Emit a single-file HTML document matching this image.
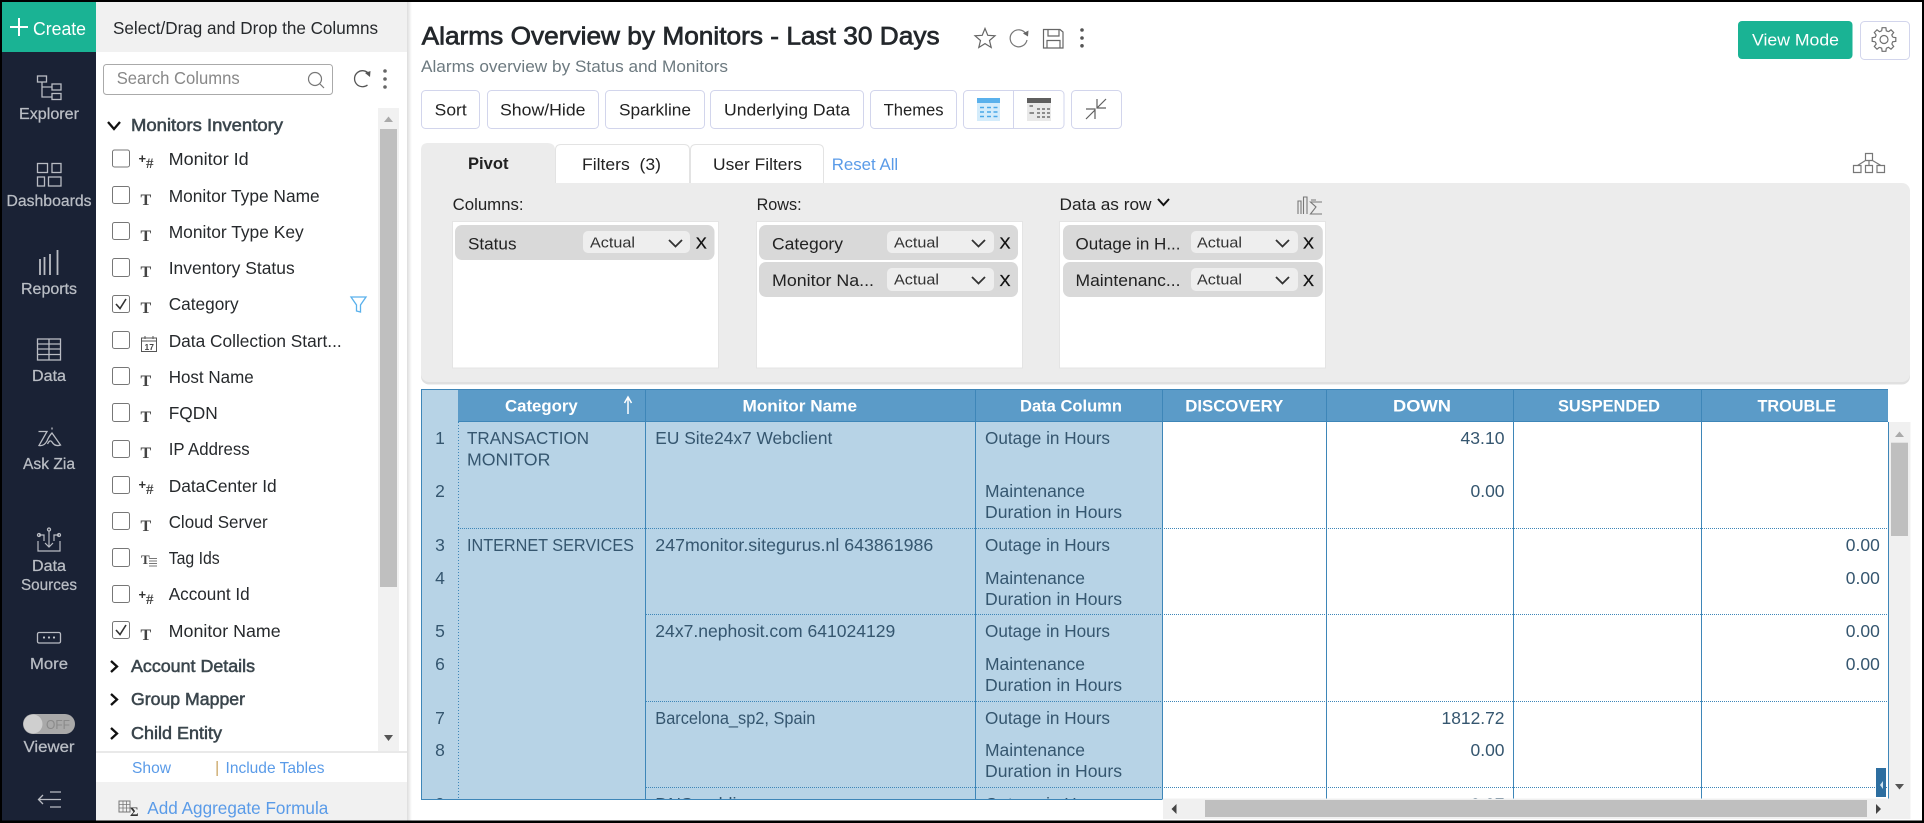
<!DOCTYPE html>
<html><head><meta charset="utf-8"><style>
html,body{margin:0;padding:0;width:1924px;height:823px;overflow:hidden;background:#fff}
svg{display:block;font-family:"Liberation Sans",sans-serif}
text{font-size:17.5px;fill:#26292c;white-space:pre}
.n text{font-size:15.5px;fill:#b9bdc4;stroke:#b9bdc4;stroke-width:.25}
.g{fill:#3b464d;stroke:#3b464d;stroke-width:.55}
.ty{font-family:"Liberation Serif",serif;font-weight:bold;font-size:16px;fill:#444}
.h{font-size:15px;fill:#444;font-family:"Liberation Serif",serif;font-weight:bold}
.p{font-size:13px;fill:#333;font-weight:bold}
.b{font-size:17px;fill:#222}
.a{font-size:15px;fill:#333}
.x{font-size:15.5px;fill:#111;stroke:#111;stroke-width:.3}
.th{fill:#fff;font-weight:bold;font-size:17px}
.c text{fill:#35566f}
.i{fill:none;stroke:#b9bcc3;stroke-width:1.3}
.k{fill:none;stroke:#777;stroke-width:1.2}
.chev{fill:none;stroke:#333;stroke-width:1.8}
</style></head><body>
<svg width="1924" height="823" viewBox="0 0 1924 823" xmlns="http://www.w3.org/2000/svg">
<defs>
<clipPath id="tc"><rect x="421" y="389" width="1468" height="410"/></clipPath>
<linearGradient id="sh" x1="0" x2="1" y1="0" y2="0"><stop offset="0" stop-color="#ddd"/><stop offset="1" stop-color="#fff"/></linearGradient>
</defs>
<rect width="1924" height="823" fill="#fff"/>

<!-- Left nav -->
<rect x="2" y="2" width="94" height="820" fill="#1a2235"/>
<rect x="2" y="2" width="94" height="50" fill="#1ab394"/>
<path d="M19 18V36M10 27H28" stroke="#fff" stroke-width="2" fill="none"/>
<text x="33" y="35" textLength="53" lengthAdjust="spacingAndGlyphs" style="font-size:18px;fill:#fff">Create</text>
<g class="n">
<text x="19" y="119" textLength="60" lengthAdjust="spacingAndGlyphs">Explorer</text>
<text x="6.5" y="206" textLength="85" lengthAdjust="spacingAndGlyphs">Dashboards</text>
<text x="21" y="294" textLength="56" lengthAdjust="spacingAndGlyphs">Reports</text>
<text x="32" y="381" textLength="34" lengthAdjust="spacingAndGlyphs">Data</text>
<text x="23" y="469" textLength="52" lengthAdjust="spacingAndGlyphs">Ask Zia</text>
<text x="32" y="571" textLength="34" lengthAdjust="spacingAndGlyphs">Data</text>
<text x="21" y="590" textLength="56" lengthAdjust="spacingAndGlyphs">Sources</text>
<text x="30" y="669" textLength="38" lengthAdjust="spacingAndGlyphs">More</text>
<text x="23.5" y="752" textLength="51" lengthAdjust="spacingAndGlyphs">Viewer</text>
</g>
<g class="i">
<rect x="37.5" y="76" width="9" height="6"/><rect x="52" y="84" width="9" height="6"/><rect x="52" y="93.5" width="9" height="6"/><path d="M42 82V97H52M42 87H52"/>
<rect x="37.5" y="163.5" width="10" height="9"/><rect x="52" y="163.5" width="9" height="9"/><rect x="37.5" y="177" width="7" height="9"/><rect x="48.5" y="177" width="12.5" height="9"/>
<path d="M40 259V275M44.5 257V275M50 254V275M57.5 250V275" stroke-width="1.8"/>
<rect x="37.5" y="339" width="23" height="21"/><path d="M37.5 344H60.5M37.5 349H60.5M37.5 354.500H60.500M49 339V360"/>
<path d="M38.500 431.500H47L39 445.500Q44 446.500 47 441Q49 436 52 433L60.500 445Q55 447 52 442Q50 439 47.500 444M52 427.500V429.500" stroke-width="1.3"/>
<path d="M38 541V551H60V541M49 531V547M45 543L49 547L53 543M39 535H44V541M59 535H54V541" stroke-width="1.2"/>
<circle cx="49" cy="529.500" r="1.500"/><circle cx="39" cy="535" r="1.500"/><circle cx="59" cy="535" r="1.500"/>
<rect x="37.500" y="632.500" width="23" height="10.500" rx="1.500"/>
<path d="M50 792H61M38.500 799.500H61M50 807H61M43 795L38.500 799.500L43 804"/>
</g>
<circle cx="44" cy="637.500" r="1.100" fill="#c5c8ce"/><circle cx="49" cy="637.500" r="1.100" fill="#c5c8ce"/><circle cx="54" cy="637.500" r="1.100" fill="#c5c8ce"/>
<rect x="23" y="714" width="52" height="20" rx="10" fill="#a9a9a9"/><circle cx="33" cy="724" r="9.500" fill="#cfcfcf"/>
<text x="46" y="729" textLength="24" lengthAdjust="spacingAndGlyphs" style="font-size:13px;fill:#8a8a8a">OFF</text>

<!-- Column panel -->
<rect x="96" y="2" width="311" height="50" fill="#f1f1f1"/>
<rect x="407" y="2" width="5" height="820" fill="url(#sh)"/>
<text x="113" y="34" textLength="265" lengthAdjust="spacingAndGlyphs" fill="#333">Select/Drag and Drop the Columns</text>
<rect x="103.500" y="64.500" width="229" height="30" rx="3" fill="#fff" stroke="#aaa"/>
<text x="116.700" y="84" textLength="123" lengthAdjust="spacingAndGlyphs" style="fill:#888">Search Columns</text>
<circle cx="315" cy="79" r="6.500" class="k"/><path d="M320 84L324 88" class="k"/>
<path d="M369 74A8 8 0 1 0 367.500 85" fill="none" stroke="#555" stroke-width="1.300"/><path d="M365 73L370 77L370.500 71Z" fill="#555"/>
<circle cx="385" cy="71" r="1.800" fill="#666"/><circle cx="385" cy="79" r="1.800" fill="#666"/><circle cx="385" cy="87" r="1.800" fill="#666"/>

<rect x="378" y="108" width="21" height="643" fill="#f1f1f1"/>
<rect x="380" y="129" width="17" height="458" fill="#bfbfbf"/>
<path d="M384 122L388.500 116.500L393 122Z" fill="#aaa"/><path d="M384 735L388.500 741L393 735Z" fill="#555"/>

<path d="M108 122L114 129L120 122" fill="none" stroke="#111" stroke-width="2.300"/>
<text x="131" y="131" textLength="152" lengthAdjust="spacingAndGlyphs" class="g">Monitors Inventory</text>
<text x="168.700" y="165" textLength="80" lengthAdjust="spacingAndGlyphs">Monitor Id</text>
<text x="168.700" y="202" textLength="151" lengthAdjust="spacingAndGlyphs">Monitor Type Name</text>
<text x="168.700" y="238" textLength="135" lengthAdjust="spacingAndGlyphs">Monitor Type Key</text>
<text x="168.700" y="274" textLength="126" lengthAdjust="spacingAndGlyphs">Inventory Status</text>
<text x="168.700" y="310" textLength="70" lengthAdjust="spacingAndGlyphs">Category</text>
<text x="168.700" y="347" textLength="173" lengthAdjust="spacingAndGlyphs">Data Collection Start...</text>
<text x="168.700" y="383" textLength="85" lengthAdjust="spacingAndGlyphs">Host Name</text>
<text x="168.700" y="419" textLength="49" lengthAdjust="spacingAndGlyphs">FQDN</text>
<text x="168.700" y="455" textLength="81" lengthAdjust="spacingAndGlyphs">IP Address</text>
<text x="168.700" y="492" textLength="108" lengthAdjust="spacingAndGlyphs">DataCenter Id</text>
<text x="168.700" y="528" textLength="99" lengthAdjust="spacingAndGlyphs">Cloud Server</text>
<text x="168.700" y="564" textLength="51" lengthAdjust="spacingAndGlyphs">Tag Ids</text>
<text x="168.700" y="600" textLength="81" lengthAdjust="spacingAndGlyphs">Account Id</text>
<text x="168.700" y="637" textLength="112" lengthAdjust="spacingAndGlyphs">Monitor Name</text>
<g fill="#fff" stroke="#777" stroke-width="1">
<rect x="112.500" y="150" width="17" height="17" rx="2"/><rect x="112.500" y="186.500" width="17" height="17" rx="2"/><rect x="112.500" y="222.500" width="17" height="17" rx="2"/><rect x="112.500" y="258.500" width="17" height="18" rx="2"/><rect x="112.500" y="295.500" width="17" height="17" rx="2"/><rect x="112.500" y="331.500" width="17" height="17" rx="2"/><rect x="112.500" y="367.500" width="17" height="17" rx="2"/><rect x="112.500" y="403.500" width="17" height="18" rx="2"/><rect x="112.500" y="440.500" width="17" height="17" rx="2"/><rect x="112.500" y="476.500" width="17" height="17" rx="2"/><rect x="112.500" y="512.500" width="17" height="17" rx="2"/><rect x="112.500" y="548.500" width="17" height="18" rx="2"/><rect x="112.500" y="585.500" width="17" height="17" rx="2"/><rect x="112.500" y="621.500" width="17" height="17" rx="2"/>
</g>
<path d="M116 304L120 308.500L126 299M116 630L120 634.500L126 625" fill="none" stroke="#333" stroke-width="1.600"/>
<g>
<text x="138.500" y="163" class="p">+</text><text x="146" y="168" class="h">#</text>
<text x="140.500" y="205" class="ty">T</text><text x="140.500" y="241" class="ty">T</text><text x="140.500" y="277" class="ty">T</text><text x="140.500" y="313" class="ty">T</text>
<text x="140.500" y="386" class="ty">T</text><text x="140.500" y="422" class="ty">T</text><text x="140.500" y="458" class="ty">T</text>
<text x="138.500" y="489" class="p">+</text><text x="146" y="494" class="h">#</text>
<text x="140.500" y="531" class="ty">T</text>
<text x="141" y="564" class="ty" style="font-size:13px">T</text><path d="M149 558.500H157M149 561H157M149 563.500H157M149 566H157" stroke="#777" stroke-width=".9"/>
<text x="138.500" y="599" class="p">+</text><text x="146" y="604" class="h">#</text>
<text x="140.500" y="640" class="ty">T</text>
</g>
<rect x="141.500" y="338" width="15" height="13.500" fill="none" stroke="#555"/><path d="M141.500 341H156.500M145 336V339M153 336V339" stroke="#555"/>
<text x="144.500" y="350" style="font-size:8.500px;font-weight:bold;fill:#444">17</text>
<path d="M351 297H366L360.500 305V312L356.500 311V305Z" fill="none" stroke="#5ab1ec" stroke-width="1.300"/>
<path d="M111 661L117 666.500L111 672M111 694L117 699.500L111 705M111 728L117 733.500L111 739" fill="none" stroke="#111" stroke-width="2.300"/>
<text x="131" y="672" textLength="124" lengthAdjust="spacingAndGlyphs" class="g">Account Details</text>
<text x="131" y="705" textLength="114" lengthAdjust="spacingAndGlyphs" class="g">Group Mapper</text>
<text x="131" y="739" textLength="91" lengthAdjust="spacingAndGlyphs" class="g">Child Entity</text>
<rect x="96" y="751" width="311" height="2" fill="#e9e9e9"/>
<text x="132" y="773" textLength="39" lengthAdjust="spacingAndGlyphs" style="font-size:16px;fill:#5a9be8">Show</text>
<rect x="216.500" y="761" width="1.300" height="15" fill="#c9a563"/>
<text x="225.500" y="773" textLength="99" lengthAdjust="spacingAndGlyphs" style="font-size:16px;fill:#5a9be8">Include Tables</text>
<rect x="96" y="782" width="311" height="40" fill="#f1f1f1"/>
<rect x="119" y="801" width="11" height="11" fill="none" stroke="#777"/><path d="M119 804.500H130M119 808H130M123 801V812M126.500 801V812" stroke="#777" stroke-width=".8"/>
<text x="130" y="816" style="font-size:13px;font-weight:bold;fill:#333;font-family:'Liberation Serif',serif">Σ</text>
<text x="147.300" y="814" textLength="181" lengthAdjust="spacingAndGlyphs" style="fill:#5a9be8">Add Aggregate Formula</text>

<!-- Header -->
<text x="421.600" y="44.300" textLength="518" lengthAdjust="spacingAndGlyphs" style="font-size:25px;fill:#23272b;stroke:#23272b;stroke-width:.7">Alarms Overview by Monitors - Last 30 Days</text>
<text x="421" y="72" textLength="307" lengthAdjust="spacingAndGlyphs" style="font-size:16.500px;fill:#6d7a80">Alarms overview by Status and Monitors</text>
<path d="M985 28.500L987.800 35.300L995 35.800L989.500 40.500L991.200 47.500L985 43.600L978.800 47.500L980.500 40.500L975 35.800L982.200 35.300Z" class="k" stroke-width="1.300" style="stroke:#666"/>
<path d="M1026 34A8.500 8.500 0 1 0 1027 40" class="k"/><path d="M1023 33.500L1028 36.500L1028.500 30.500Z" fill="#666"/>
<path d="M1043.500 29.500H1060L1063 32V48H1043.500Z" class="k" style="stroke:#666"/><path d="M1048 29.500V36H1059V29.500M1047 48V40.500H1060V48" class="k" style="stroke:#666"/>
<circle cx="1082" cy="30" r="1.800" fill="#555"/><circle cx="1082" cy="38" r="1.800" fill="#555"/><circle cx="1082" cy="45.800" r="1.800" fill="#555"/>

<g fill="#fff" stroke="#d2d5ec">
<rect x="421.500" y="90.500" width="58" height="38" rx="4"/><rect x="487.500" y="90.500" width="111" height="38" rx="4"/><rect x="605.500" y="90.500" width="99" height="38" rx="4"/><rect x="710.500" y="90.500" width="153" height="38" rx="4"/><rect x="870.500" y="90.500" width="86" height="38" rx="4"/><rect x="963.500" y="90.500" width="100.500" height="38" rx="4"/><path d="M1013.500 90.500V128.500" fill="none"/><rect x="1071.500" y="90.500" width="50" height="38" rx="4"/>
<rect x="1860.500" y="21.500" width="49" height="38" rx="4"/>
</g>
<text x="434.700" y="115.500" textLength="32" lengthAdjust="spacingAndGlyphs" class="b">Sort</text>
<text x="500" y="115.500" textLength="85.500" lengthAdjust="spacingAndGlyphs" class="b">Show/Hide</text>
<text x="619" y="115.500" textLength="72" lengthAdjust="spacingAndGlyphs" class="b">Sparkline</text>
<text x="724" y="115.500" textLength="126" lengthAdjust="spacingAndGlyphs" class="b">Underlying Data</text>
<text x="883.600" y="115.500" textLength="60" lengthAdjust="spacingAndGlyphs" class="b">Themes</text>
<rect x="977" y="98" width="23" height="23" fill="#d4ecfb"/><rect x="977" y="98" width="23" height="5" fill="#5ab1ec"/><path d="M980 107.500H984M987 107.500H991M993.500 107.500H997.500M980 112H984M987 112H991M993.500 112H997.500M980 116.500H984M987 116.500H991M993.500 116.500H997.500" stroke="#4aa8e8" stroke-width="1.500"/>
<rect x="1027" y="98" width="24" height="23" fill="#e9e9e9" stroke="none"/><rect x="1027" y="98" width="24" height="5" fill="#5f5f5f"/><path d="M1029.500 106H1033M1037 109H1040M1042 109H1045M1047 109H1050M1037 113H1040M1042 113H1045M1047 113H1050M1029.500 113H1034M1037 117H1040M1042 117H1045M1047 117H1050" stroke="#555" stroke-width="1.300"/>
<path d="M1086 109H1095V119M1086 119L1095 110M1106 108H1097V99M1106 99L1097 108" fill="none" stroke="#5f5f5f" stroke-width="1.200"/>
<rect x="1738" y="21" width="114.500" height="38" rx="4" fill="#1ab394"/>
<text x="1752" y="45.500" textLength="87" lengthAdjust="spacingAndGlyphs" style="font-size:17px;fill:#fff">View Mode</text>
<g transform="translate(1884 39.500)" fill="none" stroke="#6f6f6f" stroke-width="1.200">
<circle r="4"/>
<polyline points="8.700,-2.300 11.800,-1.900 11.800,1.900 8.700,2.300 7.800,4.500"/>
<polyline transform="rotate(45)" points="8.700,-2.300 11.800,-1.900 11.800,1.900 8.700,2.300 7.800,4.500"/>
<polyline transform="rotate(90)" points="8.700,-2.300 11.800,-1.900 11.800,1.900 8.700,2.300 7.800,4.500"/>
<polyline transform="rotate(135)" points="8.700,-2.300 11.800,-1.900 11.800,1.900 8.700,2.300 7.800,4.500"/>
<polyline transform="rotate(180)" points="8.700,-2.300 11.800,-1.900 11.800,1.900 8.700,2.300 7.800,4.500"/>
<polyline transform="rotate(225)" points="8.700,-2.300 11.800,-1.900 11.800,1.900 8.700,2.300 7.800,4.500"/>
<polyline transform="rotate(270)" points="8.700,-2.300 11.800,-1.900 11.800,1.900 8.700,2.300 7.800,4.500"/>
<polyline transform="rotate(315)" points="8.700,-2.300 11.800,-1.900 11.800,1.900 8.700,2.300 7.800,4.500"/>
</g>

<!-- Pivot panel -->
<rect x="421" y="185" width="1489" height="198" rx="8" fill="#000" opacity=".12" transform="translate(0 1.500)"/>
<rect x="421" y="183" width="1489" height="199" rx="8" fill="#ececec"/>
<path d="M421 190V150Q421 143 428 143H547Q555 143 555 150V190Z" fill="#ececec"/>
<path d="M555.500 183V150Q555.500 144.500 561 144.500H684Q689.500 144.500 689.500 150V183M690.500 183V150Q690.500 144.500 696 144.500H818Q823.500 144.500 823.500 150V183" fill="#fff" stroke="#e3e3e3"/>
<text x="468" y="169" textLength="40.500" lengthAdjust="spacingAndGlyphs" style="font-size:17px;font-weight:bold;fill:#222">Pivot</text>
<text x="582" y="170" textLength="79" lengthAdjust="spacingAndGlyphs" class="b">Filters  (3)</text>
<text x="713" y="170" textLength="89" lengthAdjust="spacingAndGlyphs" class="b">User Filters</text>
<text x="831.700" y="170" textLength="66.500" lengthAdjust="spacingAndGlyphs" style="font-size:17px;fill:#5a9be8">Reset All</text>
<path d="M1853.500 165.500H1861V172.500H1853.500ZM1865.500 165.500H1872.500V172.500H1865.500ZM1877 165.500H1884.500V172.500H1877ZM1865.500 153.500H1872.500V160.500H1865.500ZM1869 160.500V165.500M1865.500 160.500L1857.500 165.500M1872.500 160.500L1881 165.500" class="k"/>
<text x="452.600" y="210" textLength="71" lengthAdjust="spacingAndGlyphs" class="b">Columns:</text>
<text x="756.600" y="210" textLength="45" lengthAdjust="spacingAndGlyphs" class="b">Rows:</text>
<text x="1059.500" y="210" textLength="92" lengthAdjust="spacingAndGlyphs" class="b">Data as row</text>
<path d="M1158 199L1163.500 205L1169 199" fill="none" stroke="#111" stroke-width="2"/>
<path d="M1298 214V201H1301V214M1303.500 214V197H1307V214M1311 200H1316M1322 214H1310.500L1316 207L1310.500 202H1322" fill="none" stroke="#777" stroke-width="1.100"/>
<g fill="#fff" stroke="#e4e4e4">
<rect x="452.500" y="221.500" width="266" height="146.500"/><rect x="756.500" y="221.500" width="266" height="146.500"/><rect x="1059.500" y="221.500" width="266" height="146.500"/>
</g>
<g fill="#d9d9d9">
<rect x="455" y="225" width="259.500" height="35" rx="7"/><rect x="759" y="225" width="259" height="35" rx="7"/><rect x="759" y="262" width="259" height="35" rx="7"/><rect x="1063" y="225" width="259.800" height="35" rx="7"/><rect x="1063" y="262" width="259.800" height="35" rx="7"/>
</g>
<g fill="#eeeeee">
<rect x="583" y="231" width="107" height="22" rx="5"/><rect x="887" y="231" width="107" height="22" rx="5"/><rect x="887" y="268" width="107" height="23" rx="5"/><rect x="1191" y="231" width="107" height="22" rx="5"/><rect x="1191" y="268" width="107" height="23" rx="5"/>
</g>
<text x="468" y="249.300" textLength="48.500" lengthAdjust="spacingAndGlyphs" class="b">Status</text>
<text x="772" y="249.300" textLength="71" lengthAdjust="spacingAndGlyphs" class="b">Category</text>
<text x="772" y="286" textLength="102" lengthAdjust="spacingAndGlyphs" class="b">Monitor Na...</text>
<text x="1075.500" y="249.300" textLength="105" lengthAdjust="spacingAndGlyphs" class="b">Outage in H...</text>
<text x="1075.500" y="286" textLength="105" lengthAdjust="spacingAndGlyphs" class="b">Maintenanc...</text>
<text x="590" y="247.500" textLength="45" lengthAdjust="spacingAndGlyphs" class="a">Actual</text>
<text x="894" y="247.500" textLength="45" lengthAdjust="spacingAndGlyphs" class="a">Actual</text>
<text x="894" y="284.500" textLength="45" lengthAdjust="spacingAndGlyphs" class="a">Actual</text>
<text x="1197" y="247.500" textLength="45" lengthAdjust="spacingAndGlyphs" class="a">Actual</text>
<text x="1197" y="284.500" textLength="45" lengthAdjust="spacingAndGlyphs" class="a">Actual</text>
<path d="M669 240L675.500 246.500L682 240M972 240L978.500 246.500L985 240M972 277L978.500 283.500L985 277M1276 240L1282.500 246.500L1289 240M1276 277L1282.500 283.500L1289 277" class="chev" style="stroke:#333"/>
<text x="695.800" y="248.500" textLength="11" lengthAdjust="spacingAndGlyphs" class="x">X</text>
<text x="999.500" y="248.500" textLength="11" lengthAdjust="spacingAndGlyphs" class="x">X</text>
<text x="999.500" y="286" textLength="11" lengthAdjust="spacingAndGlyphs" class="x">X</text>
<text x="1303" y="248.500" textLength="11" lengthAdjust="spacingAndGlyphs" class="x">X</text>
<text x="1303" y="286" textLength="11" lengthAdjust="spacingAndGlyphs" class="x">X</text>

<!-- Table -->
<g clip-path="url(#tc)">
<rect x="421" y="389" width="742" height="411" fill="#b7d3e6"/>
<rect x="458" y="389" width="1430" height="33" fill="#5b9bc8"/>
<g stroke="#3e86b8" stroke-dasharray="1 2" fill="none">
<path d="M458.500 422V800"/>
</g>
<g stroke="#3e86b8" stroke-dasharray="1 1" fill="none">
<path d="M458 528.500H1888M646 614.500H1888M646 701.500H1888M646 787.500H1888"/>
</g>
<g stroke="#3e86b8" fill="none">
<path d="M645.500 389V800M975.500 389V800M1162.500 389V800M1326.500 389V800M1513.500 389V800M1701.500 389V800M458 421.500H1888M421 389.500H1888"/>
</g>
<text x="505" y="411.700" textLength="72.700" lengthAdjust="spacingAndGlyphs" class="th">Category</text>
<path d="M628 414V398M624.500 403L628 397L631.500 403" fill="none" stroke="#fff" stroke-width="1.500"/>
<text x="742.500" y="411.700" textLength="114.500" lengthAdjust="spacingAndGlyphs" class="th">Monitor Name</text>
<text x="1020" y="411.700" textLength="102" lengthAdjust="spacingAndGlyphs" class="th">Data Column</text>
<text x="1185.300" y="411.700" textLength="98" lengthAdjust="spacingAndGlyphs" class="th">DISCOVERY</text>
<text x="1393" y="411.700" textLength="58" lengthAdjust="spacingAndGlyphs" class="th">DOWN</text>
<text x="1558" y="411.700" textLength="102" lengthAdjust="spacingAndGlyphs" class="th">SUSPENDED</text>
<text x="1757.500" y="411.700" textLength="78.500" lengthAdjust="spacingAndGlyphs" class="th">TROUBLE</text>
<g class="c">
<text x="440" y="444" text-anchor="middle">1</text><text x="440" y="497" text-anchor="middle">2</text><text x="440" y="551" text-anchor="middle">3</text><text x="440" y="584" text-anchor="middle">4</text><text x="440" y="637" text-anchor="middle">5</text><text x="440" y="670" text-anchor="middle">6</text><text x="440" y="724" text-anchor="middle">7</text><text x="440" y="756" text-anchor="middle">8</text><text x="440" y="810" text-anchor="middle">9</text>
<text x="467" y="444" textLength="122" lengthAdjust="spacingAndGlyphs">TRANSACTION</text>
<text x="467" y="465.300" textLength="83.400" lengthAdjust="spacingAndGlyphs">MONITOR</text>
<text x="467" y="551" textLength="167" lengthAdjust="spacingAndGlyphs">INTERNET SERVICES</text>
<text x="655.300" y="444" textLength="177" lengthAdjust="spacingAndGlyphs">EU Site24x7 Webclient</text>
<text x="655.300" y="551" textLength="278" lengthAdjust="spacingAndGlyphs">247monitor.sitegurus.nl 643861986</text>
<text x="655.300" y="637" textLength="240" lengthAdjust="spacingAndGlyphs">24x7.nephosit.com 641024129</text>
<text x="655.300" y="724" textLength="160" lengthAdjust="spacingAndGlyphs">Barcelona_sp2, Spain</text>
<text x="655.300" y="810" textLength="90" lengthAdjust="spacingAndGlyphs">DNS-public</text>
<text x="985" y="444" textLength="125" lengthAdjust="spacingAndGlyphs">Outage in Hours</text>
<text x="985" y="497" textLength="100" lengthAdjust="spacingAndGlyphs">Maintenance</text>
<text x="985" y="518" textLength="137" lengthAdjust="spacingAndGlyphs">Duration in Hours</text>
<text x="985" y="551" textLength="125" lengthAdjust="spacingAndGlyphs">Outage in Hours</text>
<text x="985" y="584" textLength="100" lengthAdjust="spacingAndGlyphs">Maintenance</text>
<text x="985" y="605" textLength="137" lengthAdjust="spacingAndGlyphs">Duration in Hours</text>
<text x="985" y="637" textLength="125" lengthAdjust="spacingAndGlyphs">Outage in Hours</text>
<text x="985" y="670" textLength="100" lengthAdjust="spacingAndGlyphs">Maintenance</text>
<text x="985" y="691" textLength="137" lengthAdjust="spacingAndGlyphs">Duration in Hours</text>
<text x="985" y="724" textLength="125" lengthAdjust="spacingAndGlyphs">Outage in Hours</text>
<text x="985" y="756" textLength="100" lengthAdjust="spacingAndGlyphs">Maintenance</text>
<text x="985" y="777" textLength="137" lengthAdjust="spacingAndGlyphs">Duration in Hours</text>
<text x="985" y="810" textLength="125" lengthAdjust="spacingAndGlyphs">Outage in Hours</text>
<text x="1460.500" y="444" textLength="44" lengthAdjust="spacingAndGlyphs">43.10</text>
<text x="1470.500" y="497" textLength="34" lengthAdjust="spacingAndGlyphs">0.00</text>
<text x="1441.500" y="724" textLength="63" lengthAdjust="spacingAndGlyphs">1812.72</text>
<text x="1470.500" y="756" textLength="34" lengthAdjust="spacingAndGlyphs">0.00</text>
<text x="1470.500" y="810" textLength="34" lengthAdjust="spacingAndGlyphs">0.07</text>
<text x="1845.800" y="551" textLength="34" lengthAdjust="spacingAndGlyphs">0.00</text>
<text x="1845.800" y="584" textLength="34" lengthAdjust="spacingAndGlyphs">0.00</text>
<text x="1845.800" y="637" textLength="34" lengthAdjust="spacingAndGlyphs">0.00</text>
<text x="1845.800" y="670" textLength="34" lengthAdjust="spacingAndGlyphs">0.00</text>
</g>
</g>
<path d="M421.500 389.500V799.500H1162.500" fill="none" stroke="#3e86b8"/>
<rect x="1888" y="389" width="1" height="32" fill="#fff"/>
<rect x="1888" y="422" width="1" height="378" fill="#3e86b8"/>

<!-- Scrollbars -->
<rect x="1889" y="422" width="21.500" height="397" fill="#f0f0f0"/>
<rect x="1891" y="442.700" width="17" height="93.300" fill="#bfbfbf"/>
<path d="M1895 437L1899.500 431.500L1904 437Z" fill="#aaa"/><path d="M1895 784L1899.500 789.500L1904 784Z" fill="#555"/>
<rect x="1163" y="798.500" width="747" height="20.500" fill="#f0f0f0"/>
<rect x="1205" y="800" width="662" height="17" fill="#bfbfbf"/>
<path d="M1176.500 804L1171.500 809L1176.500 814Z" fill="#444"/><path d="M1876 804L1881 809L1876 814Z" fill="#444"/>
<rect x="1876" y="768" width="10" height="29" fill="#2d6ea0"/><path d="M1883 781L1880 785L1883 789Z" fill="#cfe3f1"/>

<!-- Frame -->
<rect x="0" y="0" width="1924" height="2" fill="#000"/>
<rect x="0" y="0" width="2" height="823" fill="#000"/>
<rect x="0" y="820.500" width="1924" height="2.500" fill="#000"/>
<rect x="1922" y="0" width="2" height="823" fill="#000"/>
</svg>
</body></html>
